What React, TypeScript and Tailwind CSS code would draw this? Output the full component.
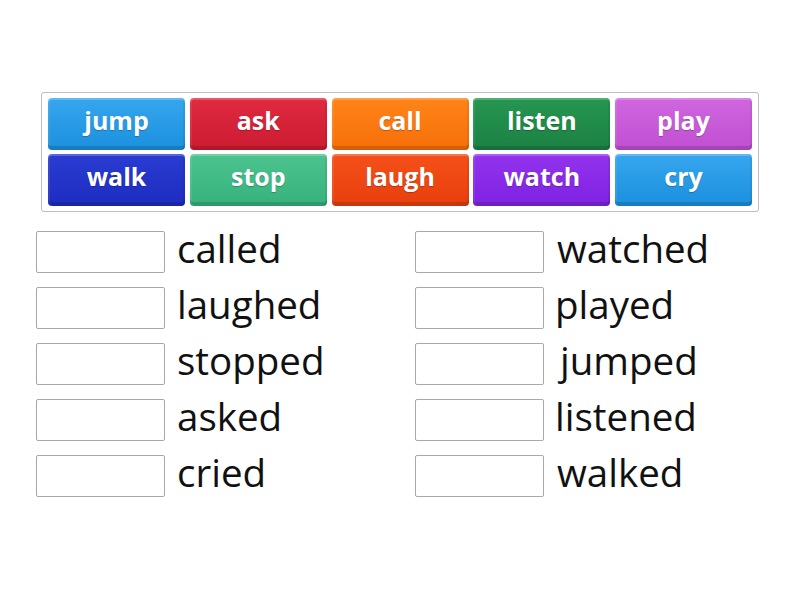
import React from 'react';

type Tile = { word: string; bg: string };

const tiles: Tile[] = [
  { word: 'jump', bg: 'bg-[linear-gradient(#36a6ee,#1b90de)]' },
  { word: 'ask', bg: 'bg-[linear-gradient(#e02a40,#cc1b31)]' },
  { word: 'call', bg: 'bg-[linear-gradient(#ff8418,#f66f0a)]' },
  { word: 'listen', bg: 'bg-[linear-gradient(#269650,#1c8144)]' },
  { word: 'play', bg: 'bg-[linear-gradient(#d066df,#c04fd2)]' },
  { word: 'walk', bg: 'bg-[linear-gradient(#2a3cd2,#1e2cc0)]' },
  { word: 'stop', bg: 'bg-[linear-gradient(#4cc38f,#37b27d)]' },
  { word: 'laugh', bg: 'bg-[linear-gradient(#f5501a,#e83f0c)]' },
  { word: 'watch', bg: 'bg-[linear-gradient(#9233ee,#7f22e2)]' },
  { word: 'cry', bg: 'bg-[linear-gradient(#36a6ee,#1b90de)]' },
];

const leftAnswers = ['called', 'laughed', 'stopped', 'asked', 'cried'];
const rightAnswers = ['watched', 'played', 'jumped', 'listened', 'walked'];
const rightOffsets = ['ml-[13px]', 'ml-[11px]', 'ml-[16px]', 'ml-[11px]', 'ml-[13px]'];

const AnswerRow = ({ text, offset }: { text: string; offset: string }) => (
  <div className="flex h-[42px] items-center">
    <div className="h-[42px] w-[129px] shrink-0 rounded-[2px] border border-[#a8a8a8] bg-white" />
    <span className={`${offset} mb-[8px] text-[38.5px] leading-[42px] text-[#111]`}>{text}</span>
  </div>
);

export default function App() {
  return (
    <div className="h-[600px] w-[800px] bg-white font-['Open_Sans',sans-serif]">
      <div className="pl-[41px] pt-[92px]">
        <div className="grid w-[718px] grid-cols-5 gap-x-[4.75px] gap-y-[4px] rounded-[3px] border border-[#bdbdbd] px-[6px] pb-[5px] pt-[5px]">
          {tiles.map((t) => (
            <div
              key={t.word}
              className={`${t.bg} flex h-[52px] items-center justify-center rounded-[4px] pb-[6px] text-[25px] font-bold text-white shadow-[inset_0_-4px_0_rgba(0,0,0,0.14),inset_0_2px_0_rgba(255,255,255,0.22),inset_2px_0_0_rgba(255,255,255,0.08),inset_-2px_0_0_rgba(0,0,0,0.06)] [text-shadow:0_1px_1px_rgba(0,0,0,0.25)]`}
            >
              {t.word}
            </div>
          ))}
        </div>
      </div>

      <div className="flex pl-[36px] pt-[19px]">
        <div className="flex w-[379px] flex-col gap-[14px]">
          {leftAnswers.map((a) => (
            <AnswerRow key={a} text={a} offset="ml-[12px]" />
          ))}
        </div>
        <div className="flex flex-col gap-[14px]">
          {rightAnswers.map((a, i) => (
            <AnswerRow key={a} text={a} offset={rightOffsets[i]} />
          ))}
        </div>
      </div>
    </div>
  );
}
